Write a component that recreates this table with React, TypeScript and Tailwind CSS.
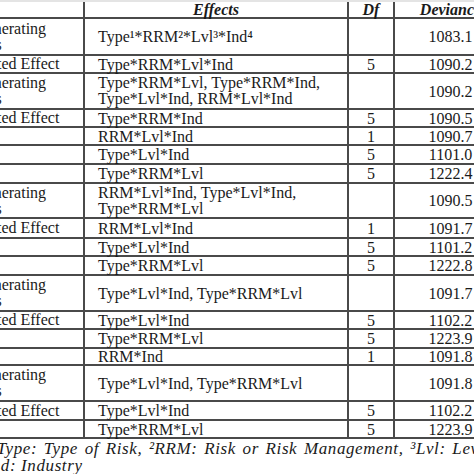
const rows: { model?: [string, string?]; effects: string[]; df?: string; dev: string; h: number }[] = [
  { model: ["Generating", "Sets"], effects: ["Type¹*RRM²*Lvl³*Ind⁴"], dev: "1083.1", h: 37 },
  { model: ["Tested Effect"], effects: ["Type*RRM*Lvl*Ind"], df: "5", dev: "1090.2", h: 18 },
  { model: ["Generating", "Sets"], effects: ["Type*RRM*Lvl, Type*RRM*Ind,", "Type*Lvl*Ind, RRM*Lvl*Ind"], dev: "1090.2", h: 36 },
  { model: ["Tested Effect"], effects: ["Type*RRM*Ind"], df: "5", dev: "1090.5", h: 18 },
  { effects: ["RRM*Lvl*Ind"], df: "1", dev: "1090.7", h: 18 },
  { effects: ["Type*Lvl*Ind"], df: "5", dev: "1101.0", h: 19 },
  { effects: ["Type*RRM*Lvl"], df: "5", dev: "1222.4", h: 19 },
  { model: ["Generating", "Sets"], effects: ["RRM*Lvl*Ind, Type*Lvl*Ind,", "Type*RRM*Lvl"], dev: "1090.5", h: 35 },
  { model: ["Tested Effect"], effects: ["RRM*Lvl*Ind"], df: "1", dev: "1091.7", h: 20 },
  { effects: ["Type*Lvl*Ind"], df: "5", dev: "1101.2", h: 18 },
  { effects: ["Type*RRM*Lvl"], df: "5", dev: "1222.8", h: 19 },
  { model: ["Generating", "Sets"], effects: ["Type*Lvl*Ind, Type*RRM*Lvl"], dev: "1091.7", h: 36 },
  { model: ["Tested Effect"], effects: ["Type*Lvl*Ind"], df: "5", dev: "1102.2", h: 18 },
  { effects: ["Type*RRM*Lvl"], df: "5", dev: "1223.9", h: 19 },
  { effects: ["RRM*Ind"], df: "1", dev: "1091.8", h: 17 },
  { model: ["Generating", "Sets"], effects: ["Type*Lvl*Ind, Type*RRM*Lvl"], dev: "1091.8", h: 36 },
  { model: ["Tested Effect"], effects: ["Type*Lvl*Ind"], df: "5", dev: "1102.2", h: 19 },
  { effects: ["Type*RRM*Lvl"], df: "5", dev: "1223.9", h: 18 },
];

const cell = "border-[2px] border-[#4a4a4a] align-middle py-0 pr-0";
const head = "border-x-[2px] border-b-[2px] border-[#4a4a4a] font-bold italic text-center p-0 leading-[15px]";

export default function App() {
  return (
    <div
      className="w-[474px] h-[474px] overflow-hidden bg-white text-[#1a1a1a]"
      style={{ fontFamily: '"Liberation Serif", "Times New Roman", serif' }}
    >
      <div className="h-[2px] bg-[#e4e4e4]" />
      <table className="ml-[-32px] border-collapse table-fixed w-[538px] text-[16px] leading-[15px]">
        <colgroup>
          <col className="w-[115px]" />
          <col className="w-[264px]" />
          <col className="w-[46px]" />
          <col className="w-[113px]" />
        </colgroup>
        <thead>
          <tr className="h-[16px]">
            <th className={head} />
            <th className={head}>Effects</th>
            <th className={head}>Df</th>
            <th className={head}>Deviance</th>
          </tr>
        </thead>
        <tbody>
          {rows.map((r, i) => (
            <tr key={i} style={{ height: r.h }}>
              <td className={`${cell} pl-[5px] whitespace-nowrap`}>
                {r.model && (
                  <>
                    <div className="leading-[16px]">{r.model[0]}</div>
                    {r.model[1] && <div className="leading-[16px]">{r.model[1]}</div>}
                  </>
                )}
              </td>
              <td className={`${cell} pl-[13px] whitespace-nowrap`}>
                {r.effects.map((e) => (
                  <div key={e} className={r.effects.length > 1 ? "leading-[16px]" : ""}>
                    {e}
                  </div>
                ))}
              </td>
              <td className={`${cell} pl-0 text-center`}>{r.df}</td>
              <td className={`${cell} pl-0 text-center`}>{r.dev}</td>
            </tr>
          ))}
        </tbody>
      </table>
      <div className="mt-[1px] italic text-[17px] leading-[17px] tracking-[0.6px]">
        <div className="ml-[-9px] w-[506px] text-justify [text-align-last:justify]">
          ¹Type: Type of Risk, ²RRM: Risk or Risk Management, ³Lvl: Level,
        </div>
        <div className="ml-[-21px]">⁴Ind: Industry</div>
      </div>
    </div>
  );
}
